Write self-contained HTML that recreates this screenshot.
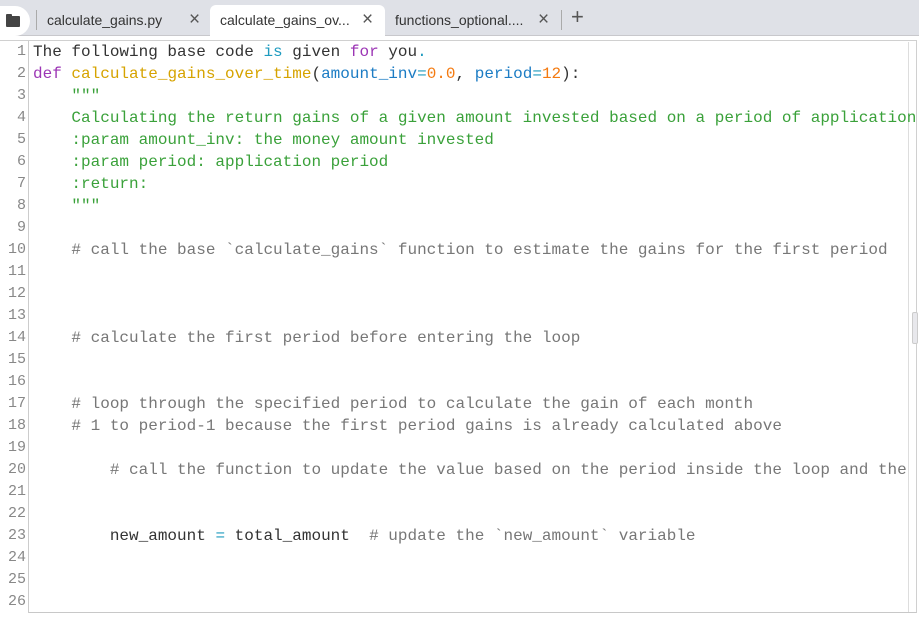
<!DOCTYPE html>
<html><head><meta charset="utf-8"><style>
*{margin:0;padding:0;box-sizing:border-box}
body{width:919px;height:618px;background:#fff;position:relative;overflow:hidden;font-family:"Liberation Sans",sans-serif}
#bar{position:absolute;left:0;top:0;width:919px;height:36px;background:#dfe1e7;border-bottom:1px solid #c8c8cc}
.fold{position:absolute;left:0;top:6px;width:30px;height:30px;background:#fff;border-radius:0 15px 15px 0}
.fold i{position:absolute;left:6px;top:10px;width:14px;height:11px;background:#444;border-radius:1px}
.fold i:before{content:"";position:absolute;left:0;top:-2px;width:6px;height:3px;background:#444;border-radius:1px 1px 0 0}
.sep{position:absolute;top:10px;width:1px;height:20px;background:#aaa}
.tab{position:absolute;top:5px;height:31px;font-size:14px;color:#333;line-height:30px}
.tab .x{position:absolute;top:0;font-size:19px;color:#555}
.act{background:#fff;border-radius:6px 6px 0 0;height:32px}
#ed{position:absolute;left:0;top:40px;width:917px;height:573px;border-top:1px solid #d0d0d0;border-bottom:1px solid #c8c8c8;border-right:1px solid #d0d0d0}
#gut{position:absolute;left:0;top:0;width:29px;height:572px;border-right:1px solid #ccc;background:#fff}
.ln{position:absolute;left:0;width:26px;text-align:right;font-family:"Liberation Mono",monospace;font-size:15px;color:#888;line-height:22px}
.cl{position:absolute;left:33px;font-family:"Liberation Mono",monospace;font-size:16px;line-height:22px;white-space:pre;color:#333}
.c{color:#777}.s{color:#3aa13a}.k{color:#9c36b5}.f{color:#d6a300}.p{color:#1c7cc4}.n{color:#f47a10}.t{color:#1f9bbf}
#vl{position:absolute;left:908px;top:42px;width:1px;height:570px;background:#ddd}
#sb{position:absolute;left:912px;top:312px;width:6px;height:32px;background:#e8e8ec;border:1px solid #ccc;border-radius:2px}
</style></head><body>
<div id="bar">
<div class="fold"><i></i></div>
<div class="sep" style="left:36px"></div>
<div class="tab" style="left:47px;width:160px">calculate_gains.py<span class="x" style="left:142px">×</span></div>
<div class="tab act" style="left:210px;width:175px;padding-left:10px">calculate_gains_ov...<span class="x" style="left:152px">×</span></div>
<div class="tab" style="left:395px;width:170px">functions_optional....<span class="x" style="left:143px">×</span></div>
<div class="sep" style="left:561px"></div>
<div class="tab" style="left:571px;font-size:22px;color:#555;top:2px">+</div>
</div>
<div id="ed"><div id="gut"></div></div>
<div id="vl"></div><div id="sb"></div>
<div id="code"></div>
<script>
var L=[
'The following base code <span class="t">is</span> given <span class="k">for</span> you<span class="t">.</span>',
'<span class="k">def</span> <span class="f">calculate_gains_over_time</span>(<span class="p">amount_inv</span><span class="t">=</span><span class="n">0.0</span>, <span class="p">period</span><span class="t">=</span><span class="n">12</span>):',
'    <span class="s">"""</span>',
'<span class="s">    Calculating the return gains of a given amount invested based on a period of application</span>',
'<span class="s">    :param amount_inv: the money amount invested</span>',
'<span class="s">    :param period: application period</span>',
'<span class="s">    :return:</span>',
'<span class="s">    """</span>',
'',
'<span class="c">    # call the base `calculate_gains` function to estimate the gains for the first period</span>',
'','','',
'<span class="c">    # calculate the first period before entering the loop</span>',
'','',
'<span class="c">    # loop through the specified period to calculate the gain of each month</span>',
'<span class="c">    # 1 to period-1 because the first period gains is already calculated above</span>',
'',
'<span class="c">        # call the function to update the value based on the period inside the loop and the</span>',
'','',
'        new_amount <span class="t">=</span> total_amount  <span class="c"># update the `new_amount` variable</span>',
'','',''];
var h='';
for(var i=0;i<26;i++){var y=41+i*22;
h+='<div class="ln" style="top:'+y+'px">'+(i+1)+'</div><div class="cl" style="top:'+y+'px">'+L[i]+'</div>';}
document.getElementById('code').innerHTML=h;
</script>
</body></html>
